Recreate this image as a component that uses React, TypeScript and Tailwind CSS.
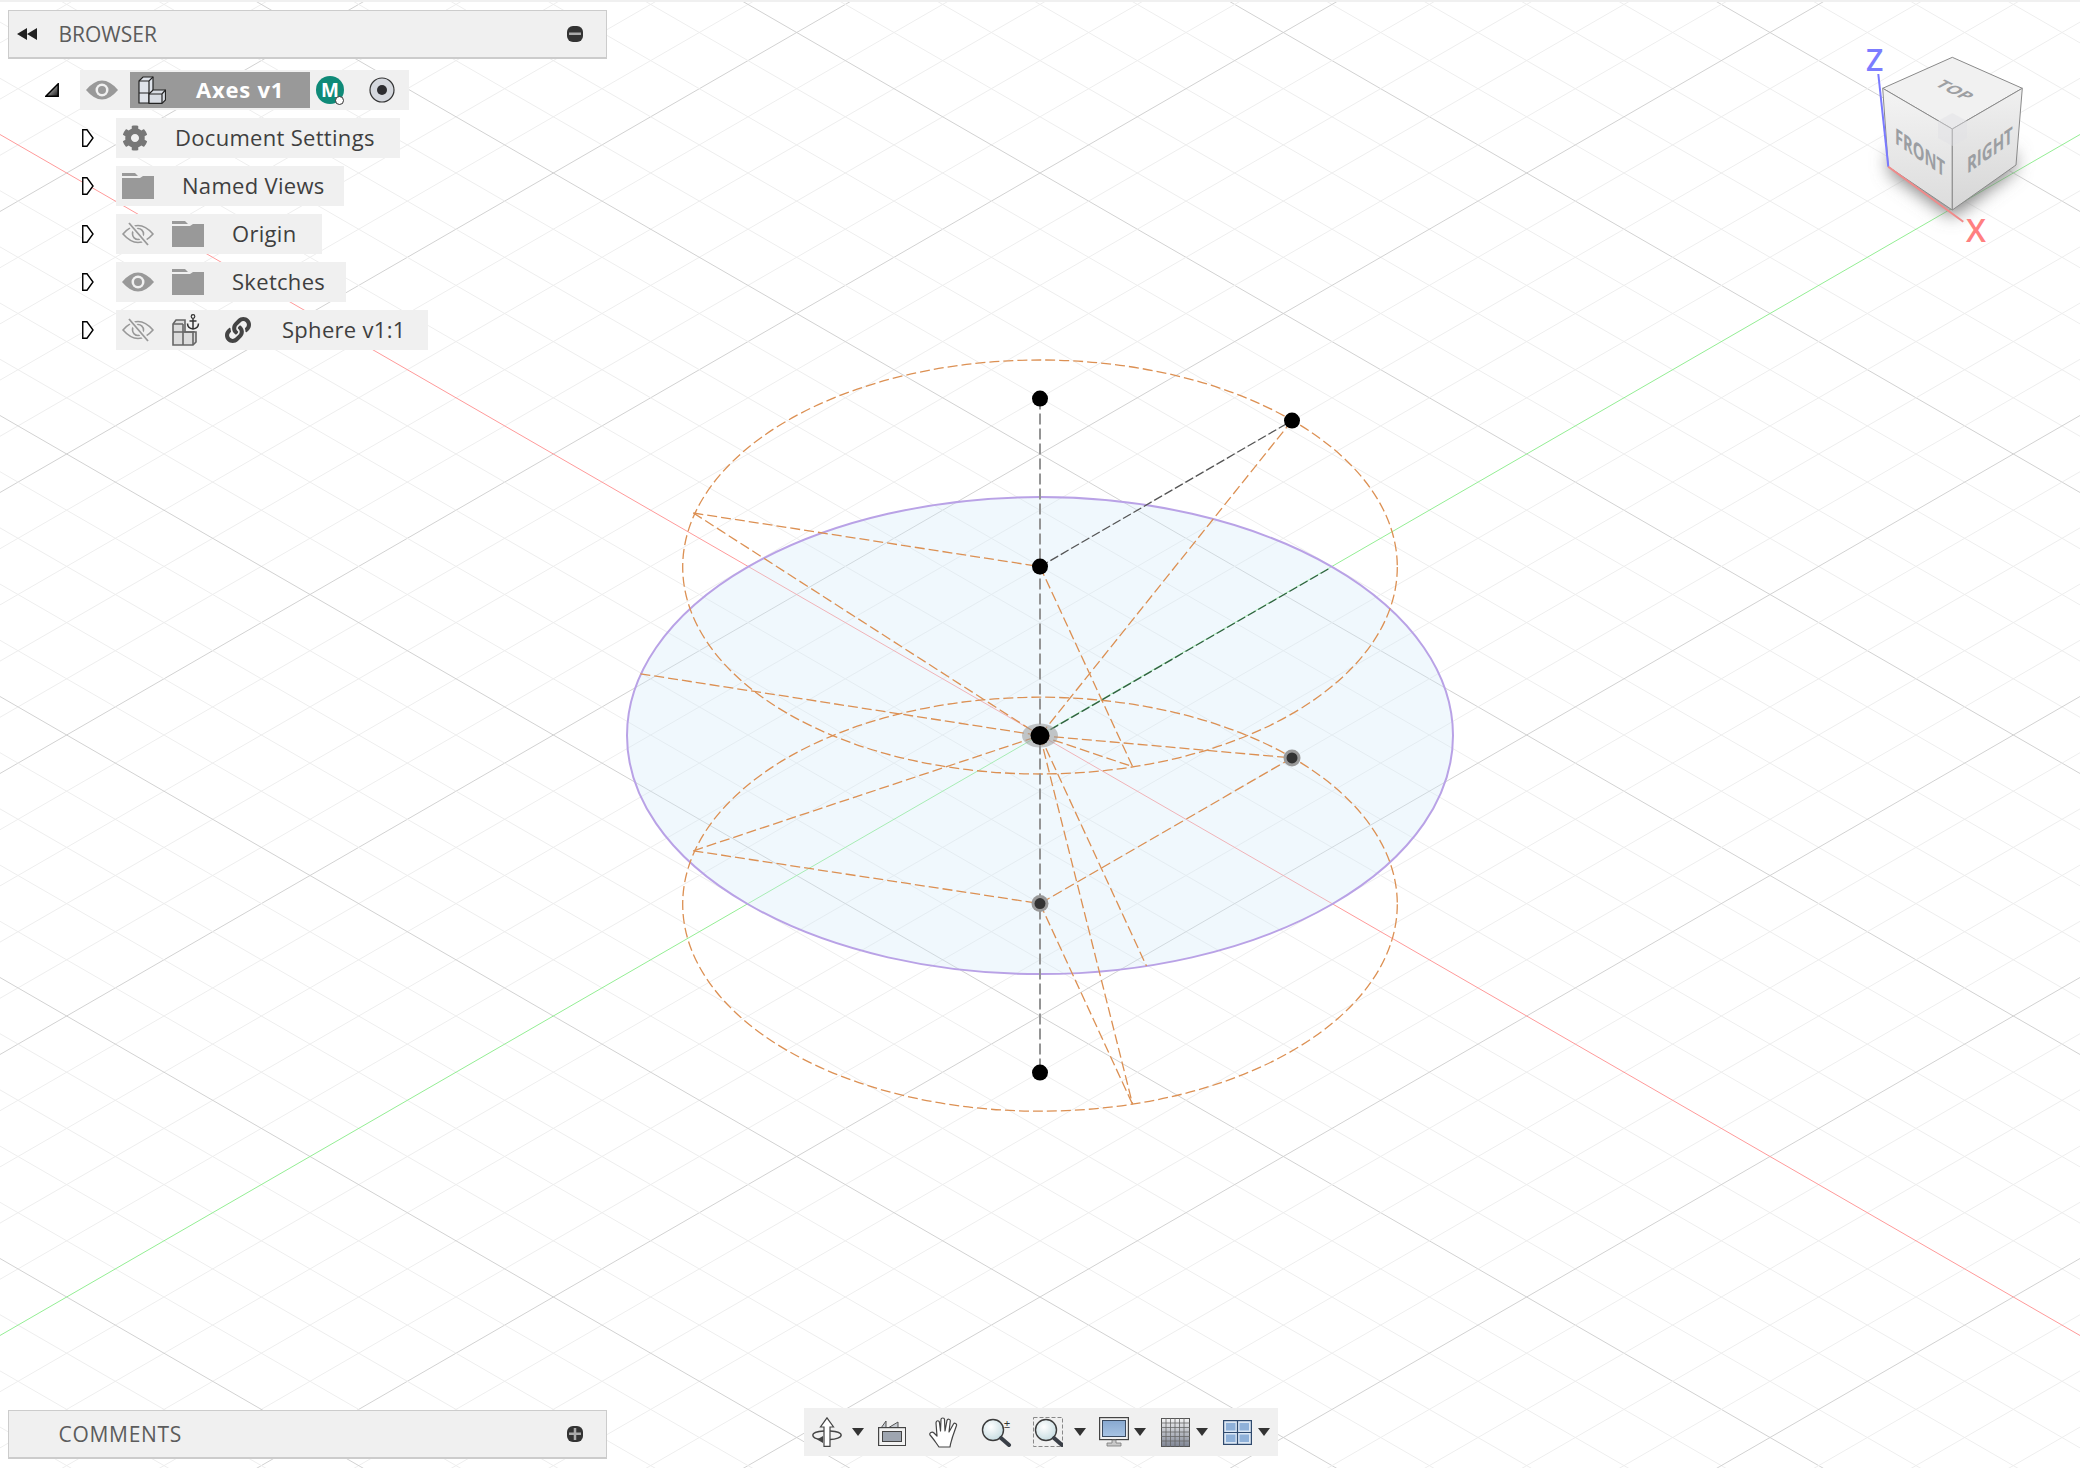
import React from 'react';
import { FaCog, FaLink } from 'react-icons/fa';

const CX = 1040;
const CY = 735;
const SLOPE = 0.5774;
const CELL = 56.2;

const orangeLines: number[][] = [
  [693.4, 512.4, 1040, 566],
  [693.4, 512.4, CX, CY],
  [640.4, 673.2, CX, CY],
  [1292, 420, CX, CY],
  [1040, 566, 1132.6, 766],
  [CX, CY, 1132.6, 766],
  [CX, CY, 1292, 757.3],
  [1292, 757.3, 1040, 903],
  [693.4, 850.2, 1040, 903],
  [693.4, 850.2, CX, CY],
  [CX, CY, 1146.5, 965.5],
  [CX, CY, 1132.6, 1103.8],
  [1040, 903, 1132.6, 1103.8]
];

const GridLines = () => {
  const lines = [];
  for (let k = -45; k <= 45; k++) {
    if (k === 0) continue;
    const major = k % 5 === 0;
    const color = major ? '#d2d2d2' : '#eeeeee';
    const off = k * CELL;
    lines.push(
      <line key={`a${k}`} x1={0} y1={CY - SLOPE * CX + off} x2={2080} y2={CY + SLOPE * 1040 + off} stroke={color} strokeWidth={1} />,
      <line key={`b${k}`} x1={0} y1={CY + SLOPE * CX + off} x2={2080} y2={CY - SLOPE * 1040 + off} stroke={color} strokeWidth={1} />
    );
  }
  return <g>{lines}</g>;
};

const ViewCube = () => (
  <g>
    <polygon points="1890,172 1952,216 2014,170 2014,150 1952,190 1890,150" fill="#777" filter="url(#cubeShadow)" />
    <polygon points="1952.3,57.3 2022.3,88.3 1952.3,129 1882.7,88.3" fill="#f1f1f1" stroke="#8a8a8a" strokeWidth="1" />
    <polygon points="1882.7,88.3 1952.3,129 1952.3,210 1888.3,166.7" fill="url(#cubeLeft)" stroke="#8a8a8a" strokeWidth="1" />
    <polygon points="1952.3,129 2022.3,88.3 2016,165 1952.3,210" fill="url(#cubeRight)" stroke="#8a8a8a" strokeWidth="1" />
    <polygon points="1952.3,113 1967,121 1967,138 1952.3,146 1938,138 1938,121" fill="#dfdfe4" opacity="0.45" />
    <text transform="matrix(0.67,0.46,0,1,1895,143)" fontFamily="'Open Sans', sans-serif" fontWeight="700" fontSize="22" fill="#9b9ea2">FRONT</text>
    <text transform="matrix(0.68,-0.48,0,1,1967,174)" fontFamily="'Open Sans', sans-serif" fontWeight="700" fontSize="22" fill="#9b9ea2">RIGHT</text>
    <text transform="matrix(0.92,0.46,-0.85,0.46,1934,85)" fontFamily="'Open Sans', sans-serif" fontWeight="700" fontSize="17" fill="#9ea0a3">TOP</text>
    <line x1="1888.3" y1="166.7" x2="1878.3" y2="74" stroke="#7a7aff" strokeWidth="2" />
    <line x1="1888.3" y1="166.7" x2="1963.3" y2="221.7" stroke="#f08a8a" strokeWidth="2" />
    <text x="1866" y="71" fontFamily="'Open Sans', sans-serif" fontWeight="600" fontSize="30" fill="#7c7cff">Z</text>
    <text x="1966" y="242" fontFamily="'Open Sans', sans-serif" fontWeight="600" fontSize="32" fill="#ff8080">X</text>
  </g>
);

const Sketch = () => (
  <g fill="none" transform="translate(0 0.6)">
    <ellipse cx={CX} cy={CY} rx={413} ry={238.5} fill="#cfe9f8" fillOpacity="0.32" stroke="#b9a2e6" strokeWidth="2" />
    <ellipse cx={CX} cy={566.4} rx={357.3} ry={207} stroke="#dc9053" strokeWidth="1.3" strokeDasharray="10 4" />
    <ellipse cx={CX} cy={903.6} rx={357.3} ry={207} stroke="#dc9053" strokeWidth="1.3" strokeDasharray="10 4" />
    {orangeLines.map((l, i) => (
      <line key={i} x1={l[0]} y1={l[1]} x2={l[2]} y2={l[3]} stroke="#dc9053" strokeWidth="1.3" strokeDasharray="10 4" />
    ))}
    <line x1={CX} y1={398} x2={CX} y2={1072} stroke="#949494" strokeWidth="2" strokeDasharray="11 4" />
    <line x1={1040} y1={566} x2={1292} y2={420} stroke="#555" strokeWidth="1.3" strokeDasharray="9 3" />
    <line x1={CX} y1={CY} x2={1330.8} y2={567} stroke="#2f5f3f" strokeWidth="1.3" strokeDasharray="9 3" />
    <ellipse cx={CX} cy={CY} rx={18} ry={12} fill="#999" opacity="0.55" />
    <circle cx={CX} cy={CY} r={9.5} fill="#000" />
    <circle cx={CX} cy={398} r={8} fill="#000" />
    <circle cx={CX} cy={566} r={8} fill="#000" />
    <circle cx={1292} cy={420} r={8} fill="#000" />
    <circle cx={CX} cy={1072} r={8} fill="#000" />
    <circle cx={1292} cy={757.3} r={8.5} fill="#999" />
    <circle cx={1292} cy={757.3} r={5.5} fill="#333" />
    <circle cx={CX} cy={903} r={8.5} fill="#999" />
    <circle cx={CX} cy={903} r={5.5} fill="#333" />
  </g>
);

const Eye = () => (
  <svg width="32" height="20" viewBox="0 0 32 20" className="shrink-0">
    <path d="M0 10Q16 -9 32 10Q16 29 0 10Z" fill="#999" />
    <circle cx="16" cy="10" r="6.5" fill="#f0f0f0" />
    <circle cx="16" cy="10" r="4" fill="#999" />
  </svg>
);

const EyeOff = () => (
  <svg width="32" height="24" viewBox="0 0 32 24" className="shrink-0">
    <path d="M1 12Q16 -5 31 12Q16 29 1 12Z" fill="none" stroke="#999" strokeWidth="1.6" />
    <circle cx="16" cy="12" r="5.5" fill="none" stroke="#999" strokeWidth="1.6" />
    <line x1="7" y1="1" x2="26" y2="23" stroke="#f0f0f0" strokeWidth="5" />
    <line x1="7" y1="1" x2="26" y2="23" stroke="#999" strokeWidth="1.8" />
  </svg>
);

const Folder = ({ className = '' }: { className?: string }) => (
  <svg width="32" height="26" viewBox="0 0 32 26" className={`shrink-0 ${className}`}>
    <path d="M0 0H13L16 3H0Z" fill="#999" />
    <path d="M0 5H18L21 3H32V26H0Z" fill="#999" />
  </svg>
);

const Chevron = () => (
  <svg width="12" height="18" viewBox="0 0 12 18" className="shrink-0">
    <path d="M0.75 0.75H5L11 9L5 17.25H0.75Z" fill="#fff" stroke="#000" strokeWidth="1.4" />
  </svg>
);

const BodyIcon = () => (
  <svg width="28" height="28" viewBox="0 0 28 28" className="shrink-0">
    <path d="M1 5L5 1H15V15L11 18V27H1Z" fill="#dfe3ea" stroke="#222" strokeWidth="1.2" />
    <path d="M1 5H11L15 1M11 5V18M1 17H11" fill="none" stroke="#222" strokeWidth="1.2" />
    <path d="M11 18L15 14H27.5V24L24 27.4H11Z" fill="#d8dce3" stroke="#222" strokeWidth="1.2" />
    <path d="M11 18H24L27.5 14M24 18V27" fill="none" stroke="#222" strokeWidth="1.2" />
  </svg>
);

const AnchorBody = ({ className = '' }: { className?: string }) => (
  <svg width="28" height="32" viewBox="0 0 28 32" className={`shrink-0 ${className}`}>
    <path d="M1 31V10L4 6H13V18H24V28L21 31Z" fill="#dcdcdc" stroke="#666" strokeWidth="1.6" />
    <path d="M1 18H21V31M11 10V31M1 10H11" fill="none" stroke="#666" strokeWidth="1.6" />
    <path d="M21 18L24 15" stroke="#666" strokeWidth="1.6" />
    <rect x="14" y="0" width="14" height="17" fill="#f0f0f0" />
    <circle cx="21" cy="2.5" r="1.8" fill="none" stroke="#333" strokeWidth="1.2" />
    <path d="M21 4.5V15M17.5 7H24.5M15.5 9.5C15.5 12.5 18 14.5 21 15C24 14.5 26.5 12.5 26.5 9.5" fill="none" stroke="#333" strokeWidth="1.5" />
  </svg>
);

const Caret = ({ className = '' }: { className?: string }) => (
  <svg width="12" height="8" viewBox="0 0 12 8" className={`shrink-0 ${className}`}>
    <path d="M0 0H12L6 8Z" fill="#333" />
  </svg>
);

const rowText = 'mb-[2px] text-[22px] tracking-[0.3px] leading-none text-[#3f3f3f] whitespace-nowrap';

const PanelBar = ({ title, left, right, titleClass = '' }: { title: string; left: React.ReactNode; right: React.ReactNode; titleClass?: string }) => (
  <div className="flex h-[49px] w-[599px] items-center border-[1.5px] border-b-[2px] border-[#cccccc] bg-[#f0f0f0] pl-[8px] pr-[23.5px]">
    {left}
    <span className={`text-[21px] leading-none text-[#5c5c5c] ${titleClass}`}>{title}</span>
    {right}
  </div>
);

const Pill = ({ plus }: { plus?: boolean }) => (
  <svg width="16" height="16" viewBox="0 0 16 16" className="ml-auto shrink-0">
    <rect width="16" height="16" rx="6" fill="#333" />
    <rect x="2" y="6.5" width="12" height="2.5" fill="#aaa" />
    {plus && <rect x="6.75" y="2" width="2.5" height="12" fill="#aaa" />}
  </svg>
);

const TreeRow = ({ children, className }: { children: React.ReactNode; className: string }) => (
  <div className="ml-[82px] flex h-[40px] items-center">
    <Chevron />
    <div className={`ml-[22px] flex h-[40px] items-center bg-[#f0f0f0] pl-[6px] ${className}`}>{children}</div>
  </div>
);

const Magnifier = () => (
  <>
    <defs>
      <radialGradient id="lens" cx="0.4" cy="0.35" r="0.8">
        <stop offset="0" stopColor="#ffffff" />
        <stop offset="1" stopColor="#bcd6dc" />
      </radialGradient>
    </defs>
    <circle cx="12" cy="12" r="10.5" fill="url(#lens)" stroke="#3b3b3b" strokeWidth="1.4" />
    <path d="M20 20L28 27" stroke="#3a3f47" strokeWidth="4" strokeLinecap="round" />
  </>
);

const ToolBar = () => (
  <div className="absolute left-[804px] top-[1408px] flex h-[48px] w-[474px] items-center bg-[#f0f0f0] pl-[8px]">
    <svg width="30" height="30" viewBox="0 0 30 30" className="shrink-0">
      <path d="M12 14C5 14.5 0.8 16 0.8 18C0.8 20.5 4.5 22 9 22.5M18 14C25 14.5 29.2 16 29.2 18C29.2 20.5 24 22.5 18 22.5" fill="none" stroke="#444" strokeWidth="1.4" />
      <path d="M15 0.8L21.5 10H18V29.4H12V10H8.5Z" fill="#fff" stroke="#444" strokeWidth="1.2" />
      <path d="M5 22.5L11 19V26Z" fill="#444" />
    </svg>
    <Caret className="ml-[10px]" />
    <svg width="28" height="27" viewBox="0 0 28 27" className="ml-[14px] shrink-0">
      <path d="M3 9L8 2V9M10 9L20 3V9" fill="#c8ccd2" stroke="#555" strokeWidth="1" />
      <rect x="0.6" y="8.6" width="27" height="18" fill="#f3f3f3" stroke="#444" strokeWidth="1.2" />
      <rect x="4.5" y="12.5" width="19" height="10" fill="#9ea5b0" stroke="#444" strokeWidth="1" />
    </svg>
    <svg width="30" height="31" viewBox="0 0 30 31" className="ml-[23px] shrink-0">
      <path d="M10 30C7 26 4 21 1 18C0 16 3 14 5 16L8 19L7 6C7 3 10.5 3 10.5 6L11.5 14L12 2.5C12 0.5 15.5 0.5 15.5 2.5L16 14L18 3.5C18.5 1.5 21.5 2 21.3 4L20 15L24.5 7C25.5 5.5 28 6.5 27.5 8.5L23.5 20C22.5 24 21.5 26 21 30Z" fill="#fff" stroke="#444" strokeWidth="1.2" strokeLinejoin="round" />
    </svg>
    <svg width="31" height="29" viewBox="0 0 31 29" className="ml-[22px] shrink-0">
      <Magnifier />
      <text x="23" y="10" fontFamily="'Liberation Sans', sans-serif" fontSize="11" fill="#333">±</text>
    </svg>
    <svg width="30" height="30" viewBox="0 0 30 30" className="ml-[21px] shrink-0">
      <rect x="0.5" y="0.5" width="29" height="29" fill="none" stroke="#888" strokeDasharray="4 2" />
      <g transform="translate(1 1)"><Magnifier /></g>
    </svg>
    <Caret className="ml-[11px]" />
    <svg width="30" height="30" viewBox="0 0 30 30" className="ml-[13px] shrink-0">
      <defs>
        <linearGradient id="screen" x1="0" y1="0" x2="0" y2="1">
          <stop offset="0" stopColor="#87a8d0" />
          <stop offset="1" stopColor="#a8c4e4" />
        </linearGradient>
      </defs>
      <rect x="0.6" y="0.6" width="28.8" height="22" fill="#f1f1f1" stroke="#444" strokeWidth="1.2" />
      <rect x="3.5" y="3.5" width="23" height="16" fill="url(#screen)" stroke="#3a4a60" strokeWidth="1" />
      <path d="M13 23H17V26H22V29H8V26H13Z" fill="#c8c8c8" stroke="#777" strokeWidth="0.8" />
    </svg>
    <Caret className="ml-[5px]" />
    <svg width="29" height="29" viewBox="0 0 29 29" className="ml-[15px] shrink-0">
      <defs>
        <linearGradient id="plane" x1="0" y1="0" x2="0" y2="1">
          <stop offset="0" stopColor="#f4f4f4" />
          <stop offset="1" stopColor="#7f8594" />
        </linearGradient>
      </defs>
      <rect x="0.5" y="0.5" width="28" height="28" fill="url(#plane)" stroke="#555" />
      <path d="M5 0V29M9.5 0V29M14 0V29M18.5 0V29M23 0V29M0 5H29M0 9.5H29M0 14H29M0 18.5H29M0 23H29" stroke="#666" strokeWidth="0.8" />
    </svg>
    <Caret className="ml-[6px]" />
    <svg width="29" height="25" viewBox="0 0 29 25" className="ml-[15px] shrink-0">
      <rect x="0.6" y="0.6" width="27.8" height="23.8" fill="#dbe7f4" stroke="#2f4a6e" strokeWidth="1.2" />
      <path d="M14.5 0V25M0 12.5H29" stroke="#2f4a6e" strokeWidth="1.2" />
      <rect x="3" y="3" width="9.5" height="7.5" fill="#8fb1d9" />
      <rect x="16.5" y="3" width="9.5" height="7.5" fill="#8fb1d9" />
      <rect x="3" y="14.5" width="9.5" height="7.5" fill="#8fb1d9" />
      <rect x="16.5" y="14.5" width="9.5" height="7.5" fill="#8fb1d9" />
    </svg>
    <Caret className="ml-[6px]" />
  </div>
);

export default function App() {
  return (
    <div className="relative h-[1468px] w-[2080px] overflow-hidden bg-white font-['Open_Sans',sans-serif]">
      <svg className="absolute inset-0" width="2080" height="1468" viewBox="0 0 2080 1468">
        <defs>
          <filter id="cubeShadow" x="-30%" y="-30%" width="160%" height="160%">
            <feGaussianBlur stdDeviation="9" />
          </filter>
          <linearGradient id="cubeLeft" x1="0" y1="0" x2="0" y2="1">
            <stop offset="0" stopColor="#f4f4f4" />
            <stop offset="1" stopColor="#dcdcdc" />
          </linearGradient>
          <linearGradient id="cubeRight" x1="0" y1="0" x2="0" y2="1">
            <stop offset="0" stopColor="#f0f0f0" />
            <stop offset="1" stopColor="#d6d6d6" />
          </linearGradient>
        </defs>
        <GridLines />
        <line x1={0} y1={CY - SLOPE * CX} x2={2080} y2={CY + SLOPE * 1040} stroke="#ff9a9a" strokeWidth="1" />
        <line x1={0} y1={CY + SLOPE * CX} x2={2080} y2={CY - SLOPE * 1040} stroke="#94ee94" strokeWidth="1" />
        <Sketch />
        <ViewCube />
      </svg>

      <div className="absolute left-0 right-0 top-0 h-[2px] bg-[#f0f0f0]" />

      <div className="absolute inset-0 flex flex-col">
        <div className="ml-[8px] mt-[10px]">
          <PanelBar
            title="BROWSER"
            left={
              <svg width="20" height="12" viewBox="0 0 20 12" className="mr-[21.5px] shrink-0">
                <path d="M10 0V12L0 6Z M20 0V12L10 6Z" fill="#222" />
              </svg>
            }
            right={<Pill />}
          />
        </div>

        <div className="mt-[11px] flex flex-col gap-[8px]">
          <div className="ml-[45px] flex h-[40px] items-center">
            <svg width="14" height="14" viewBox="0 0 14 14" className="shrink-0">
              <defs>
                <linearGradient id="expand" x1="0" y1="0" x2="1" y2="1">
                  <stop offset="0" stopColor="#ffffff" />
                  <stop offset="1" stopColor="#111111" />
                </linearGradient>
              </defs>
              <path d="M13.2 0.8V13.2H0.8Z" fill="url(#expand)" stroke="#000" strokeWidth="1.5" />
            </svg>
            <div className="ml-[21px] flex h-[40px] w-[329px] items-center bg-[#f0f0f0] pl-[6px]">
              <Eye />
              <div className="ml-[12px] flex h-[36px] w-[180px] items-center bg-[#999999] pl-[8px]">
                <BodyIcon />
                <span className="mb-[2px] ml-[30px] text-[22px] font-bold leading-none tracking-[0.8px] text-white">Axes v1</span>
              </div>
              <div className="relative ml-[6px] flex h-[28px] w-[28px] items-center justify-center rounded-full bg-[#0f8a78] text-[19px] font-bold leading-none text-white">
                M
                <span className="absolute bottom-[-1px] right-[0px] h-[9px] w-[9px] rounded-full border border-[#333] bg-white" />
              </div>
              <svg width="26" height="26" viewBox="0 0 26 26" className="ml-[25px] shrink-0">
                <circle cx="13" cy="13" r="12" fill="#d5d8de" stroke="#333" strokeWidth="1.2" />
                <circle cx="13" cy="13" r="5" fill="#2c2c30" />
              </svg>
            </div>
          </div>

          <TreeRow className="w-[284px]">
            <FaCog size={26} color="#777777" className="shrink-0" />
            <span className={`ml-[27px] ${rowText}`}>Document Settings</span>
          </TreeRow>
          <TreeRow className="w-[228px]">
            <Folder />
            <span className={`ml-[28px] ${rowText}`}>Named Views</span>
          </TreeRow>
          <TreeRow className="w-[206px]">
            <EyeOff />
            <Folder className="ml-[18px]" />
            <span className={`ml-[28px] ${rowText}`}>Origin</span>
          </TreeRow>
          <TreeRow className="w-[230px]">
            <Eye />
            <Folder className="ml-[18px]" />
            <span className={`ml-[28px] ${rowText}`}>Sketches</span>
          </TreeRow>
          <TreeRow className="w-[312px]">
            <EyeOff />
            <AnchorBody className="ml-[18px]" />
            <FaLink size={26} color="#444444" className="ml-[25px] shrink-0" />
            <span className={`ml-[31px] ${rowText}`}>Sphere v1:1</span>
          </TreeRow>
        </div>

        <div className="ml-[8px] mb-[9px] mt-auto">
          <PanelBar title="COMMENTS" titleClass="tracking-[0.7px]" left={<span className="w-[41.5px] shrink-0" />} right={<Pill plus />} />
        </div>
      </div>

      <ToolBar />
    </div>
  );
}
